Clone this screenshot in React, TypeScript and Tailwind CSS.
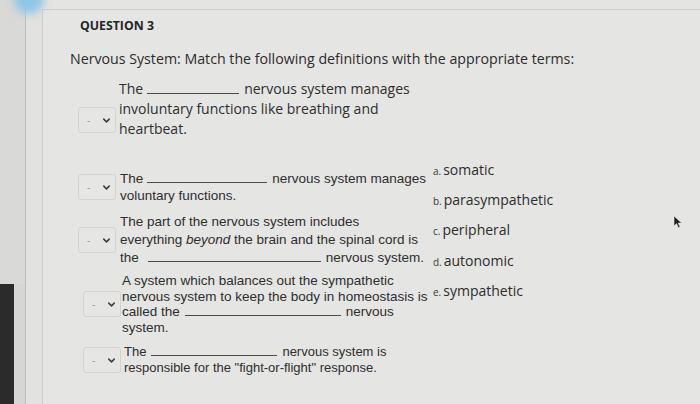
import { ChevronDown } from 'lucide-react';

const openSans = "font-['Open_Sans',sans-serif]";
const arial = "font-['Liberation_Sans',Arial,sans-serif]";

// blank line the student fills by picking a term
function Blank({ w, ml = 4 }: { w: number; ml?: number }) {
  return (
    <span
      className="mr-[5px] inline-block h-[1px] bg-[#4a4a4a] align-baseline"
      style={{ width: w, marginLeft: ml }}
    />
  );
}

function Picker() {
  return (
    <div className="flex h-[26px] w-[38px] shrink-0 items-center justify-between rounded-[3px] border border-[#d2d2d0] bg-[#e6e6e4] pl-[8px] pr-[3px]">
      <span className="text-[10px] leading-none text-[#9a9a9a]">-</span>
      <ChevronDown size={11} strokeWidth={3.2} className="text-[#3a3a3a]" />
    </div>
  );
}

const answers = [
  { key: 'a.', term: 'somatic' },
  { key: 'b.', term: 'parasympathetic' },
  { key: 'c.', term: 'peripheral' },
  { key: 'd.', term: 'autonomic' },
  { key: 'e.', term: 'sympathetic' },
];

export default function App() {
  return (
    <div className="relative flex h-[404px] w-[700px] overflow-hidden bg-[#e4e4e2] text-[#2e2e2e]">
      {/* screen bezel on the left */}
      <div className="flex w-[26px] shrink-0 flex-col border-r border-[#bdbdbb] bg-[#d9d9d7]">
        <div className="flex-1" />
        <div className="flex h-[120px]">
          <div className="w-[14px] bg-[#2b2b2b]" />
          <div className="flex-1 bg-[#d6d6d4]" />
        </div>
      </div>
      <div className="absolute left-[14px] top-[-16px] h-[30px] w-[30px] rounded-full bg-[#8cc6ea] blur-[4px]" />

      <div className="w-[16px] shrink-0 bg-[#e2e2e0]" />

      {/* question panel */}
      <div className="mt-[9px] flex-1 border-l border-t border-[#cfcfcd] bg-[#e5e5e3]">
        <div className={`${openSans} pl-[37px] pt-[7px] text-[12.3px] font-bold leading-[18px] text-[#262626]`}>
          QUESTION 3
        </div>
        <div className={`${openSans} pl-[27px] pt-[14px] text-[14.2px] leading-[20px] text-[#2c2c2c]`}>
          Nervous System: Match the following definitions with the appropriate terms:
        </div>

        <div className="flex">
          <div className="flex w-[390px] flex-col pl-[35px]">
            {/* item 1 */}
            <div className="mt-[10px] flex items-end">
              <div className="mb-[6px]">
                <Picker />
              </div>
              <div className={`${openSans} ml-[3px] text-[14px] leading-[20px] text-[#2e2e2e]`}>
                <div>
                  The
                  <Blank w={92} />
                  nervous system manages
                </div>
                <div>involuntary functions like breathing and</div>
                <div>heartbeat.</div>
              </div>
            </div>

            {/* item 2 */}
            <div className="mt-[31px] flex items-center">
              <Picker />
              <div className={`${arial} ml-[4px] text-[13.5px] leading-[17px] text-[#2e2e2e]`}>
                <div>
                  The
                  <Blank w={120} />
                  nervous system manages
                </div>
                <div>voluntary functions.</div>
              </div>
            </div>

            {/* item 3 */}
            <div className="mt-[9px] flex items-center">
              <Picker />
              <div className={`${arial} ml-[4px] text-[13.5px] leading-[18px] text-[#2e2e2e]`}>
                <div>The part of the nervous system includes</div>
                <div>
                  everything <i>beyond</i> the brain and the spinal cord is
                </div>
                <div>
                  the
                  <Blank w={173} ml={9} />
                  nervous system.
                </div>
              </div>
            </div>

            {/* item 4 */}
            <div className="mt-[6px] flex items-center pl-[5px]">
              <Picker />
              <div className={`${arial} ml-[1px] text-[13.5px] leading-[15.5px] text-[#2e2e2e]`}>
                <div>A system which balances out the sympathetic</div>
                <div>nervous system to keep the body in homeostasis is</div>
                <div>
                  called the
                  <Blank w={156} ml={5} />
                  nervous
                </div>
                <div>system.</div>
              </div>
            </div>

            {/* item 5 */}
            <div className="mt-[9px] flex items-center pl-[5px]">
              <Picker />
              <div className={`${arial} ml-[3px] text-[13px] leading-[16px] text-[#2e2e2e]`}>
                <div>
                  The
                  <Blank w={126} ml={5} />
                  nervous system is
                </div>
                <div>responsible for the "fight-or-flight" response.</div>
              </div>
            </div>
          </div>

          {/* answer bank */}
          <div className={`${openSans} mt-[91px] flex flex-col gap-[9.2px]`}>
            {answers.map((a) => (
              <div key={a.key} className="flex items-baseline gap-[2px] leading-[20px]">
                <span className="text-[10px] text-[#3a3a3a]">{a.key}</span>
                <span className="text-[14px] text-[#2c2c2c]">{a.term}</span>
              </div>
            ))}
          </div>

          {/* mouse pointer */}
          <div className="ml-[120px] mt-[146px]">
            <svg width="10" height="14" viewBox="0 0 10 14">
              <path d="M1 1 L1 11 L3.5 8.6 L5.4 12.8 L7 12 L5.2 8 L8.6 8 Z" fill="#1e1e1e" stroke="#e4e4e2" strokeWidth="0.6" />
            </svg>
          </div>
        </div>
      </div>
    </div>
  );
}
